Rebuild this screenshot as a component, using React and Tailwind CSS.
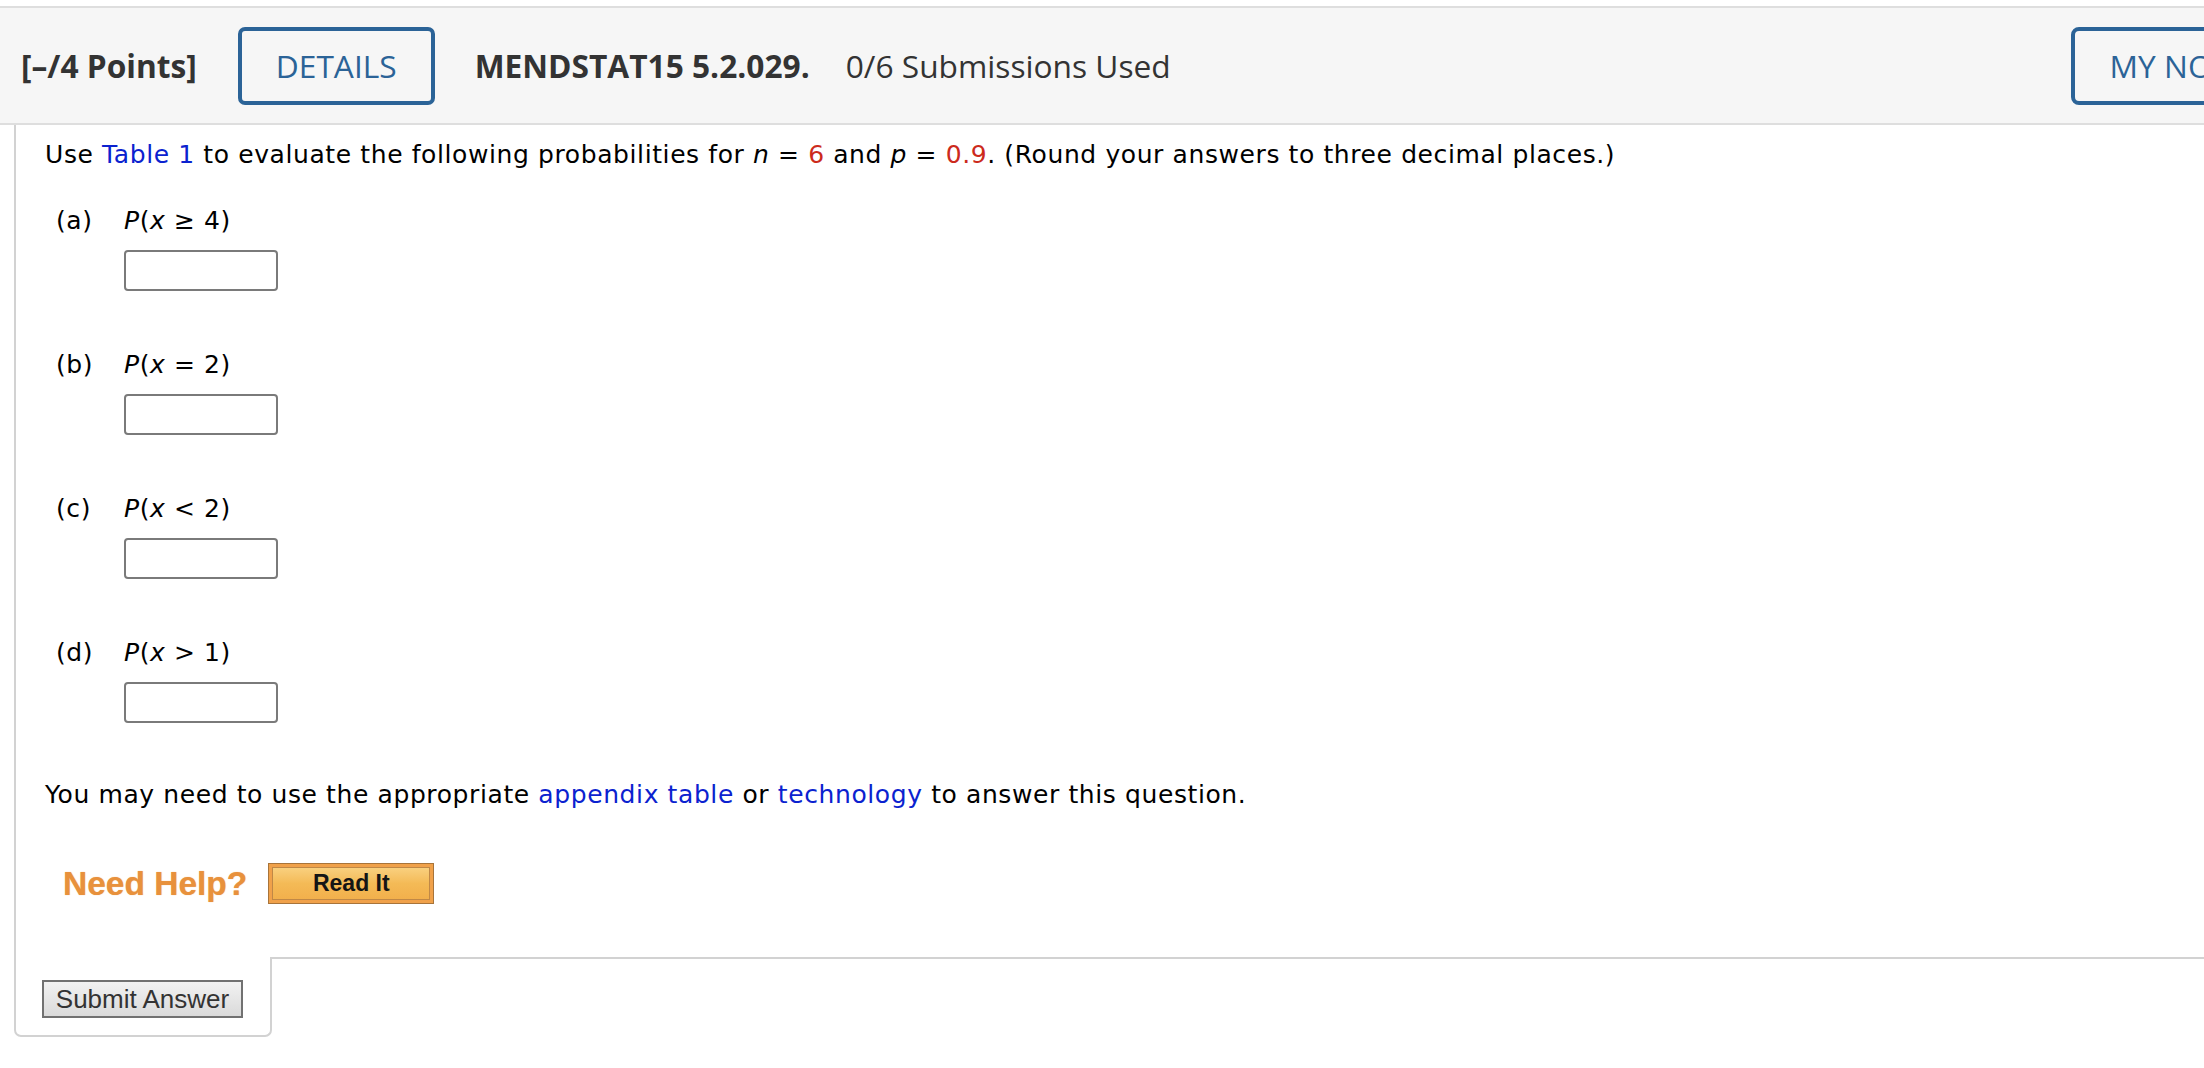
import React from "react";

const Part = ({ label, expr, first }) => (
  <div className={first ? "mt-[36px]" : "mt-[59px]"}>
    <div className="flex pl-[11px]">
      <span className="w-[68px]">{label}</span>
      <span>{expr}</span>
    </div>
    <div className="mt-[14px] ml-[79px] w-[154px] h-[41px] border-2 border-[#7a7a7a] rounded-[4px] bg-white" />
  </div>
);

const Red = ({ children }) => <span className="text-[#cc2a1c]">{children}</span>;
const Link = ({ children }) => <span className="text-[#0b22cf]">{children}</span>;

export default function App() {
  return (
    <div className="w-[2204px] h-[1068px] overflow-hidden bg-white pt-[6px]">
      <div className="flex items-center h-[119px] bg-[#f6f6f6] border-y-2 border-[#dedede] pl-[21px] font-['Open_Sans',sans-serif] text-[31.7px] text-[#333333]">
        <span className="font-bold">[–/4 Points]</span>
        <div className="ml-[41px] h-[78px] px-[34px] flex items-center border-4 border-[#2b6397] rounded-[7px] text-[#2b6397]">
          DETAILS
        </div>
        <span className="ml-[40px] font-bold">MENDSTAT15 5.2.029.</span>
        <span className="ml-[36px]">0/6 Submissions Used</span>
        <div className="ml-auto -mr-[100px] shrink-0 h-[78px] px-[35px] flex items-center border-4 border-[#2b6397] rounded-[8px] text-[#2b6397] whitespace-nowrap">
          MY NOTES
        </div>
      </div>

      <div className="ml-[14px] border-l-2 border-[#d2d2d2] pl-[29px] pt-[15px] pb-[53px] font-['DejaVu_Sans',Verdana,sans-serif] text-[25px] tracking-[0.6px] leading-[30px] text-black">
        <p className="whitespace-nowrap">
          Use <Link>Table 1</Link> to evaluate the following probabilities for <i>n</i> = <Red>6</Red> and{" "}
          <i>p</i> = <Red>0.9</Red>. (Round your answers to three decimal places.)
        </p>
        <Part first label="(a)" expr={<><i>P</i>(<i>x</i> ≥ 4)</>} />
        <Part label="(b)" expr={<><i>P</i>(<i>x</i> = 2)</>} />
        <Part label="(c)" expr={<><i>P</i>(<i>x</i> &lt; 2)</>} />
        <Part label="(d)" expr={<><i>P</i>(<i>x</i> &gt; 1)</>} />
        <p className="mt-[57px] whitespace-nowrap">
          You may need to use the appropriate <Link>appendix table</Link> or <Link>technology</Link> to answer this question.
        </p>
        <div className="mt-[53px] flex items-center pl-[18px] font-['Liberation_Sans',Arial,sans-serif] tracking-normal">
          <span className="text-[33.5px] leading-[41px] font-bold text-[#e8913c] [text-shadow:0_0_1px_#f0b070]">Need Help?</span>
          <div className="ml-[21px] w-[166px] h-[41px] border border-[#a8743a] bg-[#f0a14a] p-[3px]">
            <div className="h-full border border-[#c08846] bg-gradient-to-b from-[#f9d07e] via-[#f4ba56] to-[#f2b04c] flex items-center justify-center text-[23px] leading-none font-bold text-[#151515]">
              Read It
            </div>
          </div>
        </div>
      </div>

      <div className="flex h-[80px]">
        <div className="ml-[14px] w-[258px] shrink-0 border-x-2 border-b-2 border-[#d2d2d2] rounded-b-[7px] pl-[26px] pt-[23px]">
          <div className="w-[201px] h-[38px] border-2 border-[#717171] bg-gradient-to-b from-[#f2f2f2] to-[#dadada] flex items-center justify-center font-['Liberation_Sans',Arial,sans-serif] text-[26px] text-[#333333]">
            Submit Answer
          </div>
        </div>
        <div className="flex-1 border-t-2 border-[#d2d2d2]" />
      </div>
    </div>
  );
}
